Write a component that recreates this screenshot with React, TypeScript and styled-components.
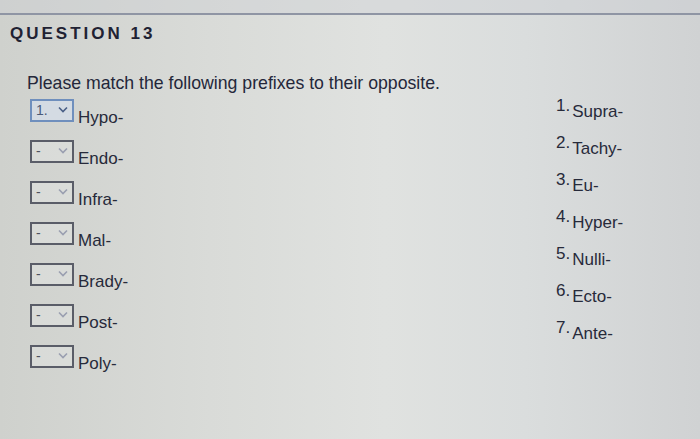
import styled, { createGlobalStyle } from 'styled-components';

const GlobalStyle = createGlobalStyle`
  html, body {
    margin: 0;
    padding: 0;
  }
  body {
    width: 700px;
    height: 439px;
    overflow: hidden;
    font-family: "Liberation Sans", Arial, sans-serif;
    color: #272a3a;
    background: linear-gradient(
      to right,
      #cfd1cd 0%,
      #d9dbd8 30%,
      #e0e2e0 55%,
      #dadddd 75%,
      #d0d2d3 100%
    );
  }
`;

const prefixes = ['Hypo-', 'Endo-', 'Infra-', 'Mal-', 'Brady-', 'Post-', 'Poly-'];
const opposites = ['Supra-', 'Tachy-', 'Eu-', 'Hyper-', 'Nulli-', 'Ecto-', 'Ante-'];

const Chevron = ({ color }: { color: string }) => (
  <svg width="10" height="7" viewBox="0 0 10 7">
    <path d="M1 1.5 L5 5.5 L9 1.5" fill="none" stroke={color} strokeWidth="1.6" />
  </svg>
);

const Question = () => {
  return (
    <Page>
      <GlobalStyle />
      <TopStrip />
      <Title>QUESTION 13</Title>
      <Prompt>Please match the following prefixes to their opposite.</Prompt>
      <Columns>
        <Prefixes>
          {prefixes.map((p, i) => (
            <Row key={p}>
              <Select $active={i === 0}>
                <span>{i === 0 ? '1.' : '-'}</span>
                <Chevron color={i === 0 ? '#4a5f86' : '#9a9fb0'} />
              </Select>
              <Label>{p}</Label>
            </Row>
          ))}
        </Prefixes>
        <Answers>
          {opposites.map((o, i) => (
            <Answer key={o}>
              <Num>{i + 1}.</Num>
              {o}
            </Answer>
          ))}
        </Answers>
      </Columns>
    </Page>
  );
};

const Page = styled.div`
  display: flex;
  flex-direction: column;
`;

const TopStrip = styled.div`
  height: 13px;
  border-bottom: 2px solid #8f95a4;
  background: rgba(205, 208, 212, 0.4);
`;

const Title = styled.div`
  margin: 9px 0 0 10px;
  font-size: 17px;
  font-weight: bold;
  letter-spacing: 3px;
  color: #1f2233;
`;

const Prompt = styled.div`
  margin: 29px 0 0 27px;
  font-size: 17.7px;
  color: #24273a;
`;

const Columns = styled.div`
  display: flex;
  margin-top: 5px;
`;

const Prefixes = styled.div`
  display: flex;
  flex-direction: column;
  gap: 18px;
  padding-left: 30px;
  width: 526px;
`;

const Row = styled.div`
  display: flex;
  align-items: flex-end;
  gap: 4px;
  height: 23px;
`;

const Select = styled.div<{ $active?: boolean }>`
  box-sizing: border-box;
  width: 44px;
  height: 23px;
  border: 2px solid ${(p) => (p.$active ? '#6f8fbd' : '#5a5d68')};
  background: ${(p) => (p.$active ? '#d4dbe3' : 'rgba(230,232,230,0.4)')};
  display: flex;
  align-items: center;
  justify-content: space-between;
  padding: 0 4px 2px 4px;
  font-size: 14px;
  color: ${(p) => (p.$active ? '#4a5a78' : '#50535e')};
`;

const Label = styled.span`
  font-size: 17px;
  line-height: 17px;
  margin-bottom: -4px;
`;

const Answers = styled.div`
  display: flex;
  flex-direction: column;
  gap: 17px;
  margin-top: 3px;
`;

const Answer = styled.div`
  font-size: 17px;
  line-height: 20px;
  display: flex;
  align-items: flex-start;
`;

const Num = styled.span`
  display: inline-block;
  margin-top: -6px;
  margin-right: 2px;
  font-size: 17px;
`;

export default Question;
